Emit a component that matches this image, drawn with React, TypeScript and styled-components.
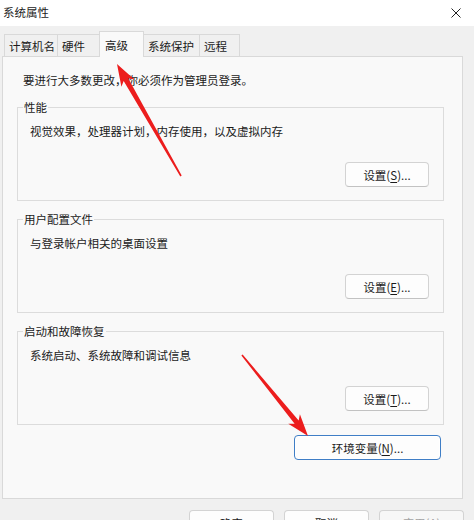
import React from "react";
import styled, { createGlobalStyle } from "styled-components";

const GlobalStyle = createGlobalStyle`
  html, body {
    margin: 0;
    padding: 0;
    background: #f0f0f0;
  }
  body {
    font-family: "Noto Sans CJK SC", "Noto Sans", sans-serif;
    font-size: 11.5px;
    color: #1b1b1b;
  }
`;

const Window = styled.div`
  position: relative;
  width: 474px;
  height: 520px;
  overflow: hidden;
  background: #f0f0f0;
`;

const TitleBar = styled.div`
  height: 26px;
  background: #ffffff;
  display: flex;
  align-items: center;
  justify-content: space-between;
  padding: 0 13px 0 3px;
  box-sizing: border-box;
`;

const Title = styled.span`
  line-height: 16px;
  margin-top: -2px;
`;

const Body = styled.div`
  padding: 0 11px 0 2px;
`;

const TabRow = styled.div`
  height: 30px;
  display: flex;
  align-items: flex-end;
  padding-left: 2px;
`;

const Tab = styled.div<{ $w: number; $active?: boolean }>`
  width: ${(p) => p.$w}px;
  height: ${(p) => (p.$active ? 26 : 22)}px;
  box-sizing: border-box;
  display: flex;
  align-items: center;
  padding-left: ${(p) => (p.$active ? 5 : 4)}px;
  border: 1px solid #d9d9d9;
  border-bottom: none;
  margin-right: -1px;
  background: ${(p) => (p.$active ? "#f9f9f9" : "#f0f0f0")};
  margin-bottom: ${(p) => (p.$active ? -1 : 0)}px;
  position: relative;
  z-index: ${(p) => (p.$active ? 2 : 0)};
  white-space: nowrap;
`;

const Panel = styled.div`
  position: relative;
  height: 443px;
  box-sizing: border-box;
  border: 1px solid #d9d9d9;
  background: #f9f9f9;
  padding: 15px 18px 0 14px;
`;

const Notice = styled.p`
  margin: 0 0 11px;
  padding-left: 6px;
  line-height: 16px;
`;

const Group = styled.fieldset`
  margin: 0 0 10px;
  padding: 8px 14px 13px 0;
  border: 1px solid #dcdcdc;
  min-inline-size: 0;
  display: flex;
  flex-direction: column;
`;

const GroupTitle = styled.legend`
  margin-left: 5px;
  padding: 0 1px;
  line-height: 16px;
`;

const Desc = styled.div`
  padding-left: 12px;
  line-height: 16px;
`;

const ButtonRow = styled.div<{ $top: number }>`
  display: flex;
  justify-content: flex-end;
  margin-top: ${(p) => p.$top}px;
`;

const Button = styled.button<{ $w: number; $focus?: boolean; $disabled?: boolean }>`
  width: ${(p) => p.$w}px;
  height: 25px;
  box-sizing: border-box;
  font-family: inherit;
  font-size: 11.5px;
  color: ${(p) => (p.$disabled ? "#a3a3a3" : "#1b1b1b")};
  background: ${(p) => (p.$disabled ? "#f7f7f7" : "#fdfdfd")};
  border: 1px solid ${(p) => (p.$focus ? "#3f7ec6" : "#d3d3d3")};
  border-bottom-color: ${(p) => (p.$focus ? "#3f7ec6" : "#c2c2c2")};
  box-shadow: ${(p) => (p.$focus ? "inset 0 0 0 1px #ffffff" : "none")};
  border-radius: 4px;
  padding: 0;
  line-height: 16px;
  u {
    text-underline-offset: 2px;
  }
`;

const EnvRow = styled.div`
  display: flex;
  justify-content: flex-end;
  padding-right: 3px;
  margin-top: 6px;
`;

const Footer = styled.div`
  display: flex;
  justify-content: flex-end;
  gap: 10px;
  margin-top: 11px;
  margin-right: -1px;
`;

const Overlay = styled.svg`
  position: absolute;
  left: 0;
  top: 0;
  pointer-events: none;
`;

type Pt = [number, number];

// tapering red arrow, thin at the tail and widening into the head
function arrowPoints(tail: Pt, tip: Pt) {
  const dx = tip[0] - tail[0];
  const dy = tip[1] - tail[1];
  const len = Math.hypot(dx, dy);
  const ux = dx / len;
  const uy = dy / len;
  const nx = -uy;
  const ny = ux;
  const head = 22;
  const notch = 18;
  const wing = 7.5;
  const neck = 2.6;
  const tailW = 0.8;
  const bx = tip[0] - ux * head;
  const by = tip[1] - uy * head;
  const cx = tip[0] - ux * notch;
  const cy = tip[1] - uy * notch;
  const pts: Pt[] = [
    [tail[0] + nx * tailW, tail[1] + ny * tailW],
    [cx + nx * neck, cy + ny * neck],
    [bx + nx * wing, by + ny * wing],
    tip,
    [bx - nx * wing, by - ny * wing],
    [cx - nx * neck, cy - ny * neck],
    [tail[0] - nx * tailW, tail[1] - ny * tailW],
  ];
  return pts.map((p) => p.join(",")).join(" ");
}

const tabs = [
  { label: "计算机名", w: 54 },
  { label: "硬件", w: 43 },
  { label: "高级", w: 45, active: true },
  { label: "系统保护", w: 57 },
  { label: "远程", w: 41 },
];

const groups = [
  { title: "性能", desc: "视觉效果，处理器计划，内存使用，以及虚拟内存", key: "S" },
  { title: "用户配置文件", desc: "与登录帐户相关的桌面设置", key: "E" },
  { title: "启动和故障恢复", desc: "系统启动、系统故障和调试信息", key: "T" },
];

export default function App() {
  return (
    <>
      <GlobalStyle />
      <Window>
        <TitleBar>
          <Title>系统属性</Title>
          <svg width="10" height="10" viewBox="0 0 10 10">
            <path d="M0.5 0.5 L9.5 9.5 M9.5 0.5 L0.5 9.5" stroke="#222" strokeWidth="1" />
          </svg>
        </TitleBar>
        <Body>
          <TabRow>
            {tabs.map((t) => (
              <Tab key={t.label} $w={t.w} $active={t.active}>
                {t.label}
              </Tab>
            ))}
          </TabRow>
          <Panel>
            <Notice>要进行大多数更改，你必须作为管理员登录。</Notice>
            {groups.map((g) => (
              <Group key={g.title}>
                <GroupTitle>{g.title}</GroupTitle>
                <Desc>{g.desc}</Desc>
                <ButtonRow $top={23}>
                  <Button $w={84}>
                    设置(<u>{g.key}</u>)...
                  </Button>
                </ButtonRow>
              </Group>
            ))}
            <EnvRow>
              <Button $w={147} $focus>
                环境变量(<u>N</u>)...
              </Button>
            </EnvRow>
          </Panel>
          <Footer>
            <Button $w={85}>确定</Button>
            <Button $w={85}>取消</Button>
            <Button $w={85} $disabled>
              应用(<u>A</u>)
            </Button>
          </Footer>
        </Body>
        <Overlay width="474" height="520">
          <polygon points={arrowPoints([181, 176], [117, 64])} fill="#ec1d1d" />
          <polygon points={arrowPoints([242, 355], [308, 436])} fill="#ec1d1d" />
        </Overlay>
      </Window>
    </>
  );
}
